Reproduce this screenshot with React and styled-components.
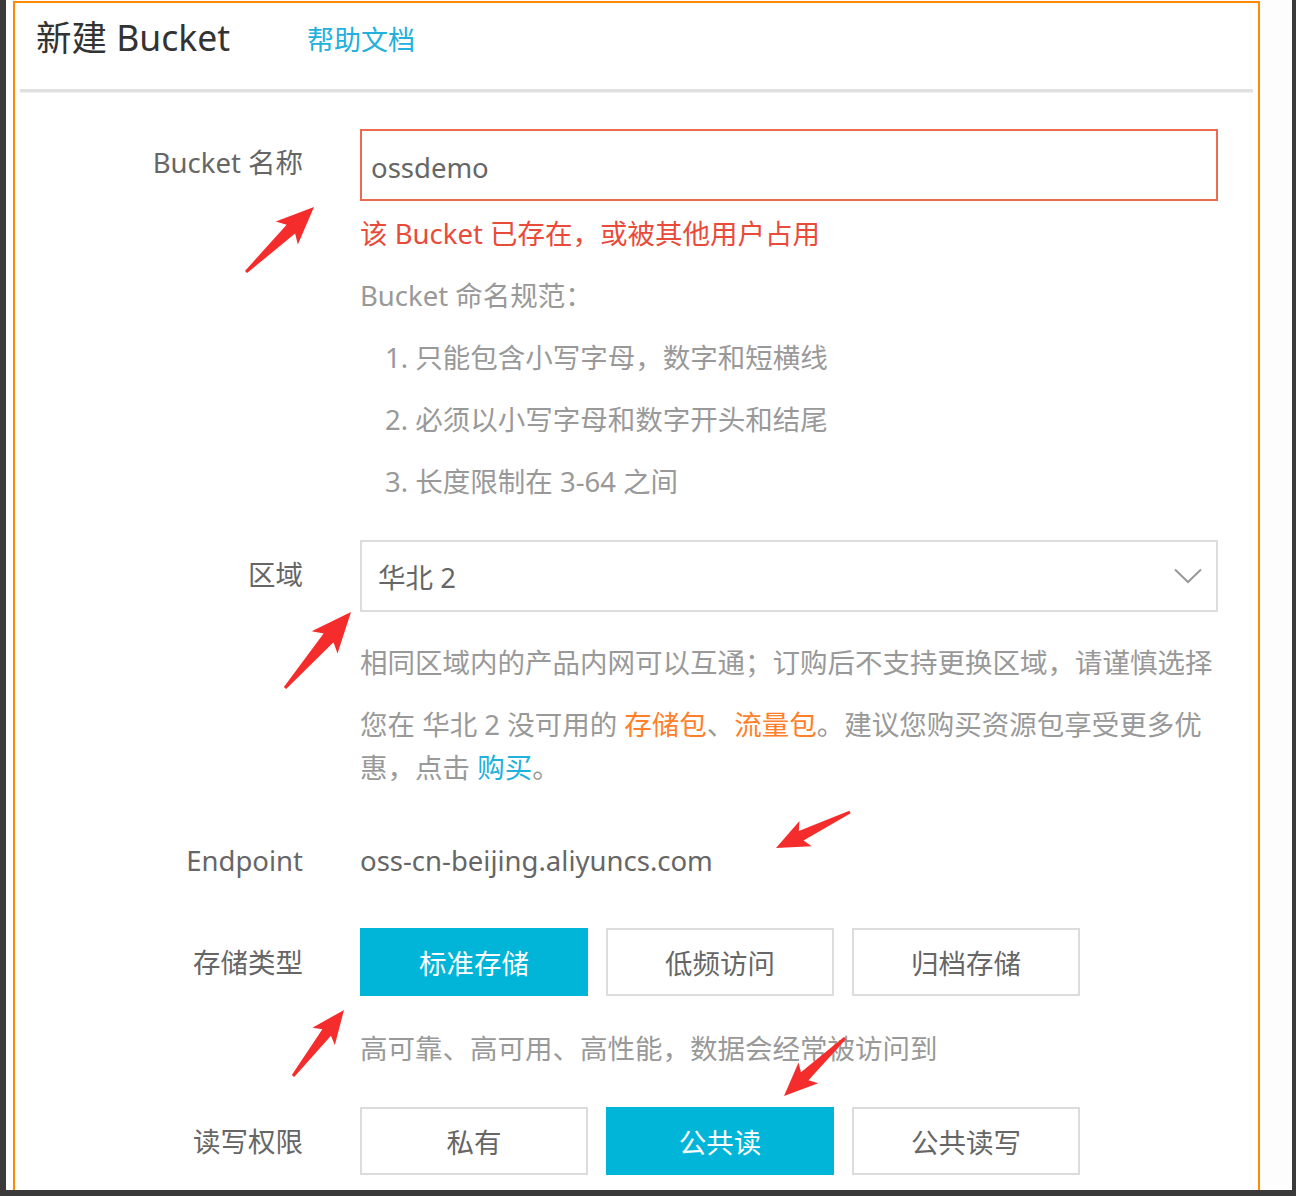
import styled, { createGlobalStyle, css } from "styled-components";

const GlobalStyle = createGlobalStyle`
	body {
		margin: 0;
		background: #3a3a3a;
		font-family: "Noto Sans", "Noto Sans CJK SC", sans-serif;
	}
`;

const Page = styled.div`
	position: relative;
	margin-left: 6px;
	width: 1286px;
	height: 1190px;
	background: #fdfdfd;
	overflow: hidden;
`;

const Frame = styled.div`
	margin: 1px 0 0 7px;
	width: 1247px;
	height: 1189px;
	box-sizing: border-box;
	border: 2px solid #ff8a00;
	border-bottom: none;
	background: #fff;
`;

const Header = styled.div`
	display: flex;
	align-items: center;
	gap: 77px;
	height: 86px;
	padding: 0 0 16px 21px;
	box-sizing: border-box;
`;

const Title = styled.h1`
	margin: 0;
	font-size: 35.5px;
	font-weight: 400;
	color: #333;
	line-height: 1;
`;

const Link = styled.a`
	color: #22b0dc;
	text-decoration: none;
	cursor: pointer;
	font-size: ${(p) => p.$size || "inherit"};
`;

const Divider = styled.div`
	height: 3px;
	margin: 0 5px;
	background: #e0e0e0;
	border-bottom: 1px solid #f0f0f0;
`;

const Form = styled.div`
	padding-top: 36px;
	font-size: 27.5px;
`;

const Row = styled.div`
	display: grid;
	grid-template-columns: 288px 858px;
	column-gap: 57px;
	align-items: start;
	margin-top: ${(p) => p.$gap || 0}px;
`;

const Label = styled.div`
	text-align: right;
	color: #666;
	line-height: 43px;
	padding-top: ${(p) => p.$offset || 0}px;
	white-space: nowrap;
`;

const Field = styled.div`
	display: flex;
	flex-direction: column;
`;

const boxBase = css`
	height: 72px;
	box-sizing: border-box;
	display: flex;
	align-items: center;
	color: #666;
	background: #fff;
`;

const Input = styled.div`
	${boxBase};
	border: 2px solid #ec6a50;
	padding-left: 9px;
	padding-top: 4px;
`;

const Select = styled.div`
	${boxBase};
	justify-content: space-between;
	border: 2px solid #dcdcdc;
	padding: 0 14px 0 16px;
`;

const Messages = styled.div`
	padding-top: 2px;
	line-height: 62px;
	color: #999;
`;

const Error = styled.div`
	color: #e84b3a;
`;

const RuleItem = styled.div`
	padding-left: 25px;
`;

const Hints = styled.div`
	margin-top: ${(p) => p.$top || 29}px;
	color: #999;
	line-height: 43px;
	p {
		margin: 0 0 19px;
		white-space: nowrap;
	}
	p:last-child {
		margin-bottom: 0;
	}
`;

const Orange = styled.span`
	color: #ff7f2a;
`;

const Value = styled.div`
	color: #666;
	line-height: 43px;
`;

const ButtonGroup = styled.div`
	display: flex;
	gap: 18px;
`;

const Option = styled.button`
	width: 228px;
	height: 68px;
	box-sizing: border-box;
	border: 2px solid ${(p) => (p.$active ? "#00b5d8" : "#dcdcdc")};
	background: ${(p) => (p.$active ? "#00b5d8" : "#fff")};
	color: ${(p) => (p.$active ? "#fff" : "#666")};
	font-family: inherit;
	font-size: 27.5px;
	padding: 0;
	cursor: pointer;
`;

const Overlay = styled.svg`
	position: absolute;
	left: 0;
	top: 0;
	pointer-events: none;
`;

const arrows = [
	[246, 272, 314, 207],
	[285, 688, 351, 612],
	[850, 812, 776, 848],
	[293, 1076, 344, 1010],
	[845, 1038, 784, 1096],
];

function Arrow({ x1, y1, x2, y2 }) {
	const L = Math.hypot(x2 - x1, y2 - y1);
	const angle = (Math.atan2(y2 - y1, x2 - x1) * 180) / Math.PI;
	const neck = L * 0.66;
	const barb = L * 0.6;
	const pts = [
		[0, -1.5],
		[neck, -L * 0.065],
		[barb, -L * 0.17],
		[L, 0],
		[barb, L * 0.17],
		[neck, L * 0.065],
		[0, 1.5],
	]
		.map((p) => p.join(","))
		.join(" ");
	return (
		<g transform={`translate(${x1 - 6},${y1}) rotate(${angle})`}>
			<polygon points={pts} fill="#f52c2c" />
		</g>
	);
}

function Chevron() {
	return (
		<svg width="28" height="16" viewBox="0 0 28 16">
			<path d="M1 1.5 L14 14 L27 1.5" fill="none" stroke="#999" strokeWidth="2" />
		</svg>
	);
}

export default function App() {
	return (
		<>
			<GlobalStyle />
			<Page>
				<Frame>
					<Header>
						<Title>新建 Bucket</Title>
						<Link $size="27px">帮助文档</Link>
					</Header>
					<Divider />
					<Form>
						<Row>
							<Label $offset={12}>Bucket 名称</Label>
							<Field>
								<Input>ossdemo</Input>
								<Messages>
									<Error>该 Bucket 已存在，或被其他用户占用</Error>
									<div>Bucket 命名规范：</div>
									<RuleItem>1. 只能包含小写字母，数字和短横线</RuleItem>
									<RuleItem>2. 必须以小写字母和数字开头和结尾</RuleItem>
									<RuleItem>3. 长度限制在 3-64 之间</RuleItem>
								</Messages>
							</Field>
						</Row>

						<Row $gap={27}>
							<Label $offset={13}>区域</Label>
							<Field>
								<Select>
									<span>华北 2</span>
									<Chevron />
								</Select>
								<Hints>
									<p>相同区域内的产品内网可以互通；订购后不支持更换区域，请谨慎选择</p>
									<p>
										您在 华北 2 没可用的 <Orange>存储包</Orange>、<Orange>流量包</Orange>。建议您购买资源包享受更多优
										<br />
										惠，点击 <Link>购买</Link>。
									</p>
								</Hints>
							</Field>
						</Row>

						<Row $gap={50}>
							<Label>Endpoint</Label>
							<Value>oss-cn-beijing.aliyuncs.com</Value>
						</Row>

						<Row $gap={46}>
							<Label $offset={13}>存储类型</Label>
							<Field>
								<ButtonGroup>
									<Option $active>标准存储</Option>
									<Option>低频访问</Option>
									<Option>归档存储</Option>
								</ButtonGroup>
								<Hints $top={31}>
									<p>高可靠、高可用、高性能，数据会经常被访问到</p>
								</Hints>
							</Field>
						</Row>

						<Row $gap={37}>
							<Label $offset={13}>读写权限</Label>
							<ButtonGroup>
								<Option>私有</Option>
								<Option $active>公共读</Option>
								<Option>公共读写</Option>
							</ButtonGroup>
						</Row>
					</Form>
				</Frame>
				<Overlay width="1286" height="1190">
					{arrows.map(([x1, y1, x2, y2], i) => (
						<Arrow key={i} x1={x1} y1={y1} x2={x2} y2={y2} />
					))}
				</Overlay>
			</Page>
		</>
	);
}
